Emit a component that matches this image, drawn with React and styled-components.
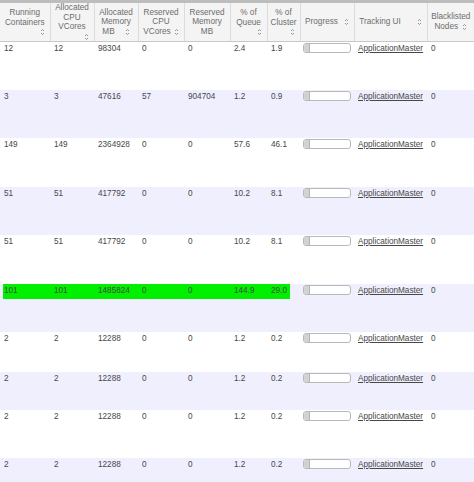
import React from "react";
import styled, { createGlobalStyle } from "styled-components";

const GlobalStyle = createGlobalStyle`
  html, body {
    margin: 0;
    padding: 0;
    background: #fff;
    overflow: hidden;
  }
  body {
    font-family: "Liberation Sans", Arial, sans-serif;
  }
`;

const columns = [
  { w: 50, lines: ["Running", "Containers"], icon: "below" },
  { w: 44, lines: ["Allocated", "CPU", "VCores"], icon: "below" },
  { w: 44, lines: ["Allocated", "Memory", "MB"], icon: "inline", gap: 10 },
  { w: 46, lines: ["Reserved", "CPU", "VCores"], icon: "inline", gap: 3 },
  { w: 46, lines: ["Reserved", "Memory", "MB"], icon: null },
  { w: 37, lines: ["% of", "Queue"], icon: "below" },
  { w: 33, lines: ["% of", "Cluster"], icon: "below" },
  { w: 54, lines: ["Progress"], icon: "inline", gap: 6 },
  { w: 73, lines: ["Tracking UI"], icon: "inline", gap: 16 },
  { w: 47, lines: ["Blacklisted", "Nodes"], icon: "inline", gap: 4 },
];

const rows = [
  { h: 48, v: ["12", "12", "98304", "0", "0", "2.4", "1.9"] },
  { h: 48, v: ["3", "3", "47616", "57", "904704", "1.2", "0.9"] },
  { h: 49, v: ["149", "149", "2364928", "0", "0", "57.6", "46.1"] },
  { h: 48, v: ["51", "51", "417792", "0", "0", "10.2", "8.1"] },
  { h: 49, v: ["51", "51", "417792", "0", "0", "10.2", "8.1"] },
  { h: 48, v: ["101", "101", "1485824", "0", "0", "144.9", "29.0"], hot: true },
  { h: 40, v: ["2", "2", "12288", "0", "0", "1.2", "0.2"] },
  { h: 38, v: ["2", "2", "12288", "0", "0", "1.2", "0.2"] },
  { h: 48, v: ["2", "2", "12288", "0", "0", "1.2", "0.2"] },
  { h: 40, v: ["2", "2", "12288", "0", "0", "1.2", "0.2"] },
];

const Page = styled.div`
  width: 474px;
  height: 482px;
  overflow: hidden;
  border-top: 3px solid #bdbdbd;
  box-sizing: border-box;
`;

const Table = styled.table`
  border-collapse: collapse;
  table-layout: fixed;
  width: ${columns.reduce((s, c) => s + c.w, 0)}px;
  font-size: 8.2px;
  line-height: 9.6px;
`;

const Th = styled.th`
  height: 38px;
  padding: 0 1px;
  background: #f4f4f4;
  color: #6c6c6c;
  font-weight: normal;
  text-align: center;
  vertical-align: middle;
  white-space: nowrap;
  border-left: 1px solid #dcdcdc;
  border-bottom: 1px solid #c8c8c8;

  &:first-child {
    border-left: none;
  }
`;

const IconLine = styled.div`
  text-align: right;
  padding-right: 4px;
  height: 9px;
`;

const SortIcon = styled.svg`
  width: 5px;
  height: 8px;
  vertical-align: middle;
  margin-left: ${(p) => p.$gap || 0}px;
`;

const Tr = styled.tr`
  background: ${(p) => (p.$even ? "#efeffe" : "#ffffff")};
`;

const Td = styled.td`
  padding: 2px 4px 0 4px;
  vertical-align: top;
  color: #474747;
  white-space: nowrap;
  overflow: hidden;
  background-image: ${(p) => (p.$hot ? "linear-gradient(#00f000, #00f000)" : "none")};
  background-repeat: no-repeat;
  background-size: ${(p) =>
    p.$hot === "start" ? "calc(100% - 3px) 15px" : p.$hot === "end" ? "23px 15px" : "100% 15px"};
  background-position: ${(p) => (p.$hot === "start" ? "right top" : "left top")};
`;

const Bar = styled.div`
  margin: -1px 0 0 -1px;
  width: 46px;
  height: 8px;
  border: 1px solid #b8b8b8;
  border-radius: 3px;
  background: #fff;
  overflow: hidden;
  display: flex;
`;

const BarFill = styled.div`
  width: 5px;
  background: #d2d2d2;
  border-right: 1px solid #b4b4b4;
`;

const Link = styled.a`
  color: #474747;
  text-decoration: underline;
`;

const Sort = ({ gap }) => (
  <SortIcon $gap={gap} viewBox="0 0 5 8">
    <path d="M1 3 L2.5 1.5 L4 3 M1 5 L2.5 6.5 L4 5" fill="none" stroke="#8a8a8a" strokeWidth="0.9" />
  </SortIcon>
);

const hotPart = (i) => (i === 0 ? "start" : i === 6 ? "end" : "mid");

const App = () => {
  return (
    <>
      <GlobalStyle />
      <Page>
        <Table>
          <colgroup>
            {columns.map((c, i) => (
              <col key={i} style={{ width: c.w }} />
            ))}
          </colgroup>
          <thead>
            <tr>
              {columns.map((c, i) => (
                <Th key={i}>
                  {c.lines.map((l, j) => (
                    <div key={j}>
                      {l}
                      {c.icon === "inline" && j === c.lines.length - 1 && <Sort gap={c.gap} />}
                    </div>
                  ))}
                  {c.icon === "below" && (
                    <IconLine>
                      <Sort />
                    </IconLine>
                  )}
                </Th>
              ))}
            </tr>
          </thead>
          <tbody>
            {rows.map((r, i) => (
              <Tr key={i} $even={i % 2 === 1} style={{ height: r.h }}>
                {r.v.map((v, j) => (
                  <Td key={j} $hot={r.hot ? hotPart(j) : undefined}>
                    {v}
                  </Td>
                ))}
                <Td>
                  <Bar>
                    <BarFill />
                  </Bar>
                </Td>
                <Td>
                  <Link href="#">ApplicationMaster</Link>
                </Td>
                <Td>0</Td>
              </Tr>
            ))}
          </tbody>
        </Table>
      </Page>
    </>
  );
};

export default App;
